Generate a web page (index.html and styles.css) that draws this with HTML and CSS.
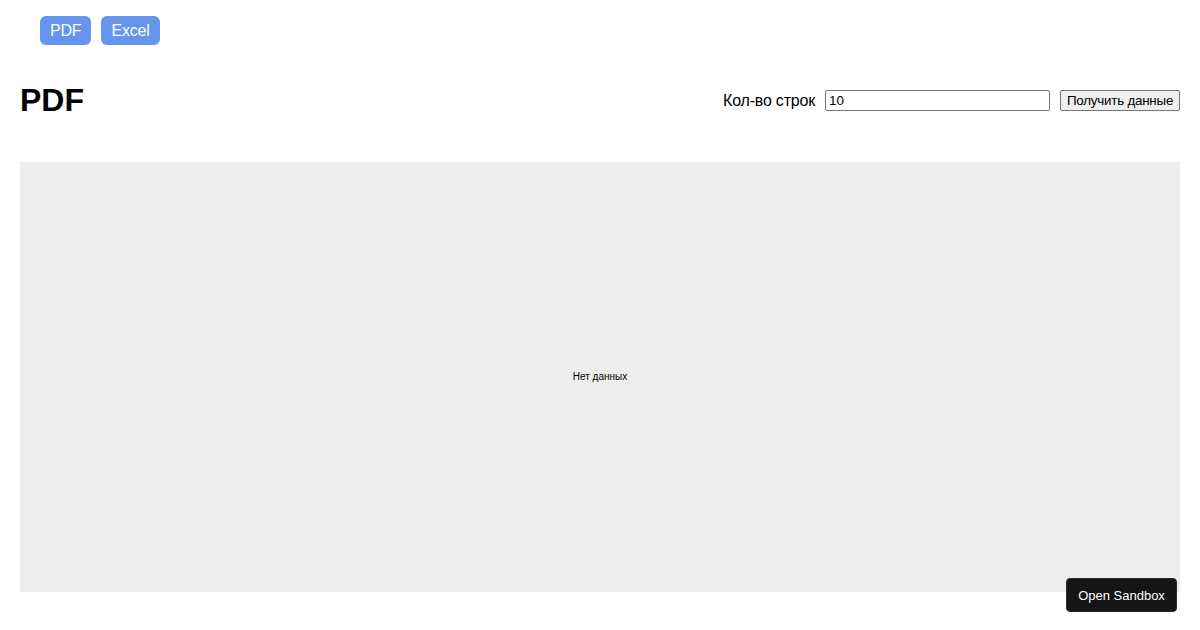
FILE: index.html
```html
<!DOCTYPE html>
<html lang="ru">
<head>
    <meta charset="UTF-8">
    <meta name="viewport" content="width=device-width, initial-scale=1.0">
    <title>PDF</title>
    <link rel="stylesheet" href="styles.css">
</head>
<body>
    <div class="page">
        <nav class="tabs">
            <button class="tab">PDF</button>
            <button class="tab">Excel</button>
        </nav>
        <div class="head">
            <h1>PDF</h1>
            <div class="controls">
                <label for="rows">Кол-во строк</label>
                <input type="text" id="rows" value="10">
                <button class="fetch">Получить данные</button>
            </div>
        </div>
        <div class="result">
            <span>Нет данных</span>
        </div>
    </div>
    <button class="sandbox">Open Sandbox</button>
</body>
</html>
```

FILE: styles.css
```css
*{
    margin: 0;
    padding: 0;
    box-sizing: border-box;
}
body{
    font-family: "Liberation Sans", Arial, sans-serif;
    color: #000;
    background: #fff;
}
.page{
    padding: 16px 20px 0 20px;
}
.tabs{
    display: flex;
    gap: 10px;
    padding-left: 20px;
}
.tab{
    font-family: "Liberation Sans", Arial, sans-serif;
    font-size: 16px;
    line-height: 19px;
    letter-spacing: -0.2px;
    padding: 5px 10px;
    color: #fff;
    background-color: #6495ed;
    border: none;
    border-radius: 6px;
    cursor: pointer;
}
.head{
    display: flex;
    align-items: center;
    justify-content: space-between;
    margin-top: 37px;
}
.head h1{
    font-size: 32px;
    line-height: 37px;
    font-weight: bold;
}
.controls{
    display: flex;
    align-items: center;
    gap: 10px;
    font-size: 16px;
    letter-spacing: -0.2px;
}
.controls input{
    width: 225px;
    height: 21px;
    padding: 0 3px;
    font-family: "Liberation Sans", Arial, sans-serif;
    font-size: 13.33px;
    border: 1px solid #767676;
    border-radius: 2px;
}
.fetch{
    width: 120px;
    height: 21px;
    font-family: "Liberation Sans", Arial, sans-serif;
    font-size: 13.33px;
    letter-spacing: -0.2px;
    color: #000;
    background-color: #efefef;
    border: 1px solid #767676;
    border-radius: 2px;
    cursor: pointer;
}
.result{
    margin-top: 43px;
    height: 430px;
    padding-bottom: 2px;
    background-color: #ededed;
    display: flex;
    align-items: center;
    justify-content: center;
    font-size: 10px;
}
.sandbox{
    position: fixed;
    right: 23px;
    bottom: 18px;
    width: 111px;
    height: 34px;
    font-family: "Liberation Sans", Arial, sans-serif;
    font-size: 13px;
    color: #fff;
    background-color: #151515;
    border: 1px solid #2a2a2a;
    border-radius: 4px;
    cursor: pointer;
}
```
